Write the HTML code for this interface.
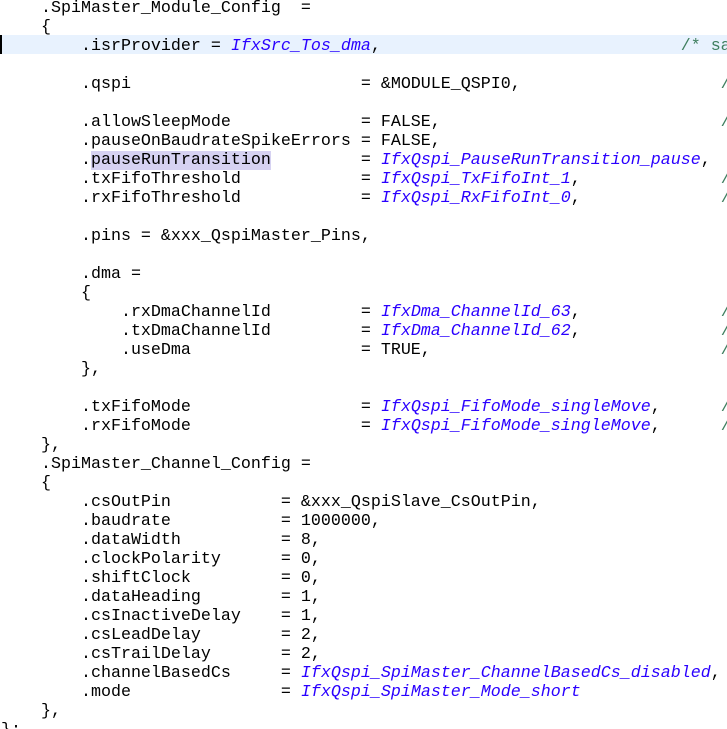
<!DOCTYPE html>
<html><head><meta charset="utf-8"><style>
html,body{margin:0;padding:0;background:#fff;width:727px;height:729px;overflow:hidden;position:relative}
pre{margin:0;position:absolute;left:1px;top:-1px;width:726px;overflow:hidden;font-family:"Liberation Mono","Courier New",monospace;font-size:16.67px;line-height:19px;color:#000;white-space:pre}
.b{color:#2a00ff;font-style:italic}
.c{color:#3f7f5f}
.hl{position:absolute;left:0;top:35px;width:727px;height:19px;background:#e8f2fe}
.cur{position:absolute;left:0;top:35px;width:2px;height:19px;background:#000}
.sel{background:#d6d2f2}
</style></head><body>
<div class="hl"></div><div class="cur"></div>
<pre>    .SpiMaster_Module_Config  =
    {
        .isrProvider = <span class="b">IfxSrc_Tos_dma</span>,                              <span class="c">/* sa</span>

        .qspi                       = &amp;MODULE_QSPI0,                    <span class="c">/</span>

        .allowSleepMode             = FALSE,                            <span class="c">/</span>
        .pauseOnBaudrateSpikeErrors = FALSE,
        .<span class="sel">pauseRunTransition</span>         = <span class="b">IfxQspi_PauseRunTransition_pause</span>,
        .txFifoThreshold            = <span class="b">IfxQspi_TxFifoInt_1</span>,              <span class="c">/</span>
        .rxFifoThreshold            = <span class="b">IfxQspi_RxFifoInt_0</span>,              <span class="c">/</span>

        .pins = &amp;xxx_QspiMaster_Pins,

        .dma =
        {
            .rxDmaChannelId         = <span class="b">IfxDma_ChannelId_63</span>,              <span class="c">/</span>
            .txDmaChannelId         = <span class="b">IfxDma_ChannelId_62</span>,              <span class="c">/</span>
            .useDma                 = TRUE,                             <span class="c">/</span>
        },

        .txFifoMode                 = <span class="b">IfxQspi_FifoMode_singleMove</span>,      <span class="c">/</span>
        .rxFifoMode                 = <span class="b">IfxQspi_FifoMode_singleMove</span>,      <span class="c">/</span>
    },
    .SpiMaster_Channel_Config =
    {
        .csOutPin           = &amp;xxx_QspiSlave_CsOutPin,
        .baudrate           = 1000000,
        .dataWidth          = 8,
        .clockPolarity      = 0,
        .shiftClock         = 0,
        .dataHeading        = 1,
        .csInactiveDelay    = 1,
        .csLeadDelay        = 2,
        .csTrailDelay       = 2,
        .channelBasedCs     = <span class="b">IfxQspi_SpiMaster_ChannelBasedCs_disabled</span>,
        .mode               = <span class="b">IfxQspi_SpiMaster_Mode_short</span>
    },
};</pre>
</body></html>
